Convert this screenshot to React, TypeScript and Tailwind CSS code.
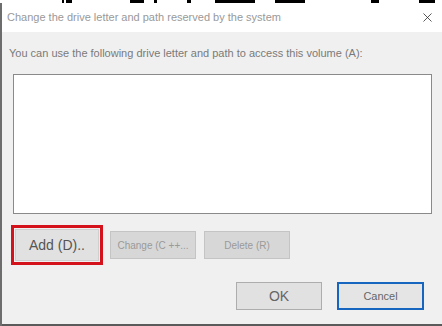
import { X } from 'lucide-react'

export default function App() {
  return (
    <div className="relative w-[442px] h-[326px] overflow-hidden bg-white font-['Liberation_Sans',Arial,sans-serif]">
      {/* cut-off fragments of the window behind */}
      <div className="flex h-[3px] overflow-hidden bg-white">
        <div className="ml-[62px] w-[2px] shrink-0 bg-black" />
        <div className="ml-[2px] w-[6px] shrink-0 bg-black" />
        <div className="ml-[58px] w-[14px] shrink-0 bg-black" />
        <div className="ml-[10px] w-[3px] shrink-0 bg-black" />
        <div className="ml-[30px] w-[4px] shrink-0 bg-black" />
        <div className="ml-[24px] w-[40px] shrink-0 bg-black" />
        <div className="ml-[20px] w-[30px] shrink-0 bg-black" />
        <div className="ml-[66px] w-[8px] shrink-0 bg-black" />
        <div className="ml-[40px] w-[16px] shrink-0 bg-black" />
      </div>
      <div className="flex h-[323px] border-l-2 border-[#6d6d6d]">
        <div className="flex flex-1 flex-col">
          <div className="flex h-[29px] items-center justify-between bg-white pl-[5px] pr-[7px]">
            <span className="text-[11px] text-[#999]">Change the drive letter and path reserved by the system</span>
            <X className="h-[15px] w-[15px] text-[#222]" strokeWidth={1.2} />
          </div>
          <div className="flex flex-1 flex-col bg-[#f0f0f0] pl-[11px] pr-[10px]">
            <p className="ml-[-4px] mt-[15px] text-[11px] leading-[13px] text-[#7a7a7a]">
              You can use the following drive letter and path to access this volume (A):
            </p>
            <div className="mt-[14px] h-[140px] border border-[#8a8a8a] bg-white" />
            <div className="mt-[11px] flex items-center">
              <div className="ml-[-2px] border-[3px] border-[#d3121c] p-px">
                <button className="h-[32px] w-[84px] border border-[#cfcfcf] bg-[#e1e1e1] text-[14px] text-[#555]">
                  Add (D)..
                </button>
              </div>
              <button className="ml-[7px] h-[28px] w-[86px] border border-[#c4c4c4] bg-[#d7d7d7] text-[10px] text-[#9a9a9a]">
                Change (C ++...
              </button>
              <button className="ml-[8px] h-[28px] w-[86px] border border-[#c4c4c4] bg-[#d7d7d7] text-[10px] text-[#9a9a9a]">
                Delete (R)
              </button>
            </div>
            <div className="mt-[17px] flex justify-end">
              <button className="h-[28px] w-[86px] border border-[#adadad] bg-[#e1e1e1] text-[14px] text-[#666]">
                OK
              </button>
              <button className="ml-[15px] mr-[8px] h-[28px] w-[87px] border-2 border-[#1666c0] bg-[#e5e5e5] text-[11px] text-[#666]">
                Cancel
              </button>
            </div>
          </div>
          <div className="h-[2px] bg-[#5a5a5a]" />
        </div>
      </div>
    </div>
  )
}
